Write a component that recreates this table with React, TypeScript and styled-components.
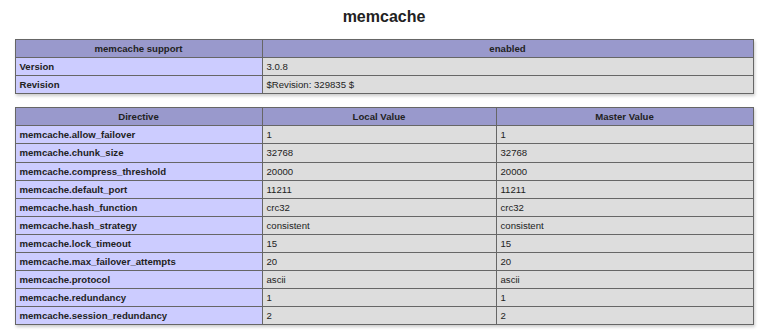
import { createGlobalStyle } from "styled-components";
import styled from "styled-components";

const GlobalStyle = createGlobalStyle`
  html, body {
    margin: 0;
    padding: 0;
    background: #fff;
  }
  body {
    color: #222;
    font-family: "Liberation Sans", Arial, sans-serif;
  }
`;

type Row = [string, string, string];

const directives: Row[] = [
  ["memcache.allow_failover", "1", "1"],
  ["memcache.chunk_size", "32768", "32768"],
  ["memcache.compress_threshold", "20000", "20000"],
  ["memcache.default_port", "11211", "11211"],
  ["memcache.hash_function", "crc32", "crc32"],
  ["memcache.hash_strategy", "consistent", "consistent"],
  ["memcache.lock_timeout", "15", "15"],
  ["memcache.max_failover_attempts", "20", "20"],
  ["memcache.protocol", "ascii", "ascii"],
  ["memcache.redundancy", "1", "1"],
  ["memcache.session_redundancy", "2", "2"],
];

const App = () => {
  return (
    <Page>
      <GlobalStyle />
      <Title>memcache</Title>
      <InfoTable>
        <colgroup>
          <col style={{ width: 247 }} />
          <col />
        </colgroup>
        <tbody>
          <tr>
            <Head>memcache support</Head>
            <Head>enabled</Head>
          </tr>
          <tr>
            <Key>Version</Key>
            <Value>3.0.8</Value>
          </tr>
          <tr>
            <Key>Revision</Key>
            <Value>$Revision: 329835 $</Value>
          </tr>
        </tbody>
      </InfoTable>
      <InfoTable>
        <colgroup>
          <col style={{ width: 247 }} />
          <col style={{ width: 234 }} />
          <col />
        </colgroup>
        <tbody>
          <tr>
            <Head>Directive</Head>
            <Head>Local Value</Head>
            <Head>Master Value</Head>
          </tr>
          {directives.map(([name, local, master]) => (
            <tr key={name}>
              <Key>{name}</Key>
              <Value>{local}</Value>
              <Value>{master}</Value>
            </tr>
          ))}
        </tbody>
      </InfoTable>
    </Page>
  );
};

export default App;

const Page = styled.div`
  display: flex;
  flex-direction: column;
  align-items: center;
  padding-top: 7px;
`;

const Title = styled.h2`
  margin: 0 0 13px;
  font-size: 16px;
  line-height: 19px;
  font-weight: bold;
  color: #222;
  text-align: center;
`;

const InfoTable = styled.table`
  width: 739px;
  border-collapse: collapse;
  border: 0;
  table-layout: fixed;
  box-shadow: 1px 2px 3px #ccc;
  margin-bottom: 13px;
  text-align: left;
`;

const Cell = styled.td`
  border: 1px solid #666;
  font-size: 9.6px;
  line-height: 11.1px;
  padding: 3px 4px;
  vertical-align: baseline;
  color: #222;
  white-space: nowrap;
  overflow: hidden;
`;

const Head = styled(Cell).attrs({ as: "th" })`
  background: #9999cc;
  font-weight: bold;
  text-align: center;
`;

const Key = styled(Cell)`
  background: #ccccff;
  font-weight: bold;
`;

const Value = styled(Cell)`
  background: #dddddd;
`;
